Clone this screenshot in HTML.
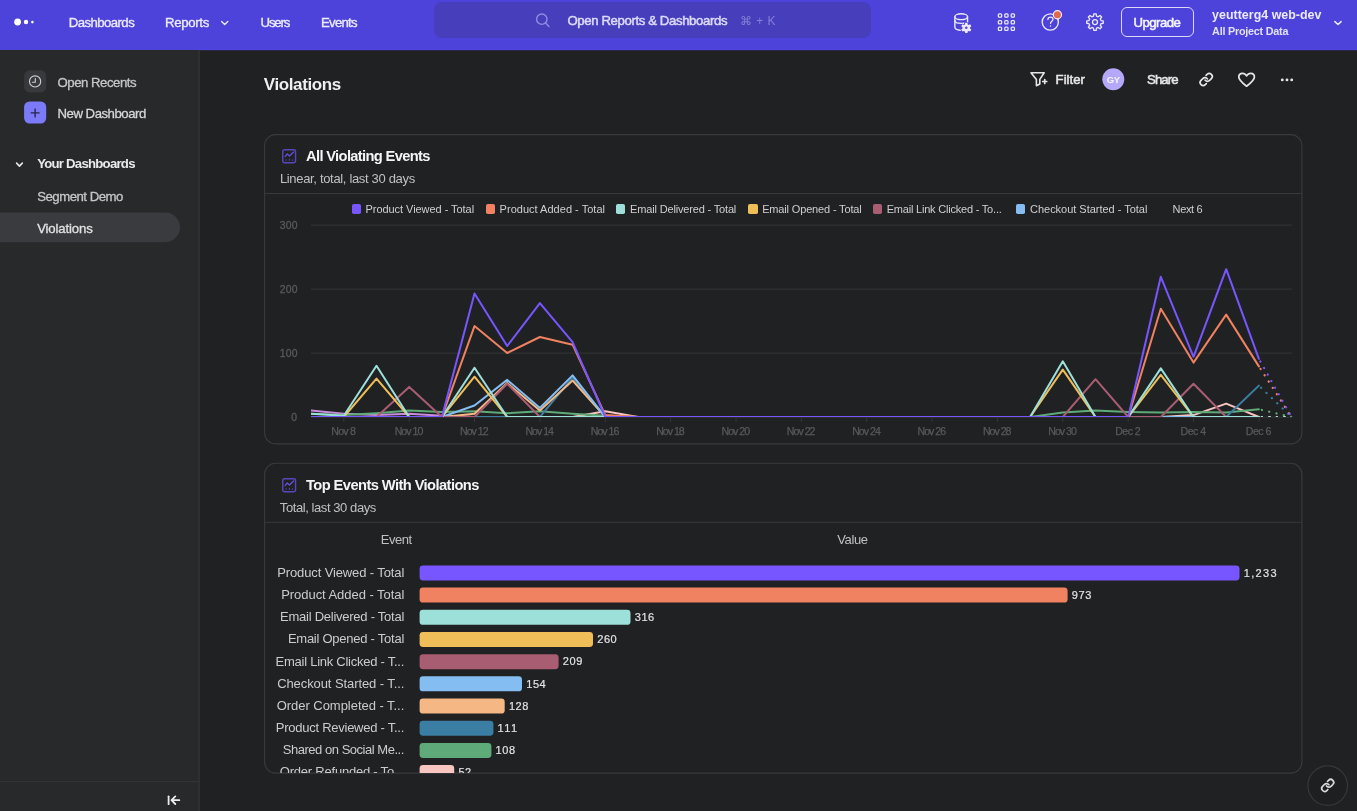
<!DOCTYPE html>
<html><head><meta charset="utf-8"><title>Violations - Mixpanel</title>
<style>
html,body{margin:0;padding:0;background:#202123;}
body{width:1357px;height:811px;overflow:hidden;position:relative;background:#202123;font-family:"Liberation Sans",sans-serif;}
div,svg{box-sizing:border-box;}
.a{position:absolute;}
</style></head><body>
<div id="app" style="position:absolute;left:0;top:0;width:1357px;height:811px;will-change:transform;">
<div class="a" style="left:0;top:0;width:1357px;height:50px;background:#4d43da;"></div>
<div class="a" style="left:0;top:50px;width:1357px;height:1px;background:rgba(77,67,218,0.2);"></div>
<svg class="a" style="left:0;top:0" width="60" height="50"><circle cx="17.6" cy="22" r="3.4" fill="#fff"/><circle cx="26" cy="22" r="2.2" fill="#fff"/><circle cx="32.4" cy="22.1" r="1.3" fill="#fff"/></svg>
<div style="position:absolute;top:16px;font:400 13.2px/13.2px 'Liberation Sans', sans-serif;color:#ebe9fb;white-space:pre;letter-spacing:-0.564px;-webkit-text-stroke:0.35px #ebe9fb;left:68.70px;">Dashboards</div>
<div style="position:absolute;top:16px;font:400 13.2px/13.2px 'Liberation Sans', sans-serif;color:#ebe9fb;white-space:pre;letter-spacing:-0.319px;-webkit-text-stroke:0.35px #ebe9fb;left:165.00px;">Reports</div>
<svg class="a" style="left:219px;top:18px" width="12" height="10"><path d="M2.6 3.5 L5.7 6.4 L8.8 3.5" fill="none" stroke="#ebe9fb" stroke-width="1.4" stroke-linecap="round" stroke-linejoin="round"/></svg>
<div style="position:absolute;top:16px;font:400 13.2px/13.2px 'Liberation Sans', sans-serif;color:#ebe9fb;white-space:pre;letter-spacing:-1.141px;-webkit-text-stroke:0.35px #ebe9fb;left:260.50px;">Users</div>
<div style="position:absolute;top:16px;font:400 13.2px/13.2px 'Liberation Sans', sans-serif;color:#ebe9fb;white-space:pre;letter-spacing:-0.750px;-webkit-text-stroke:0.35px #ebe9fb;left:321.00px;">Events</div>
<div class="a" style="left:434px;top:2px;width:437px;height:36px;border-radius:8px;background:#463ebb;"></div>
<svg class="a" style="left:530px;top:5px" width="30" height="30" fill="none" stroke="#918be3" stroke-width="1.4" stroke-linecap="round"><circle cx="11.8" cy="14.15" r="5.2"/><path d="M15.6 18.1 L19 21.6"/></svg>
<div style="position:absolute;top:14px;font:400 13.2px/13.2px 'Liberation Sans', sans-serif;color:#dcdaf6;white-space:pre;letter-spacing:-0.383px;-webkit-text-stroke:0.5px #dcdaf6;left:567.40px;">Open Reports &amp; Dashboards</div>
<div style="position:absolute;top:15px;font:400 12px/12px 'Liberation Sans', sans-serif;color:#857fd8;white-space:pre;letter-spacing:0.454px;left:740.00px;">⌘ + K</div>
<svg class="a" style="left:0;top:0" width="1357" height="50" fill="none" stroke="#ebe9fb" stroke-width="1.4" stroke-linecap="round" stroke-linejoin="round"><ellipse cx="961.2" cy="16.7" rx="6.35" ry="2.95"/><path d="M954.85 16.7 V27 C954.85 28.6 957.2 29.9 960.4 30.2"/><path d="M967.55 16.7 V22.2"/><path d="M954.85 20.5 C954.85 22.1 957.6 23.4 961.2 23.4 C962.2 23.4 963 23.3 963.8 23.2"/><path d="M970.06 28.43 L971.37 29.45 L970.18 31.51 L968.64 30.89 L967.72 31.42 L967.49 33.06 L965.11 33.06 L964.88 31.42 L963.96 30.89 L962.42 31.51 L961.23 29.45 L962.54 28.43 L962.54 27.37 L961.23 26.35 L962.42 24.29 L963.96 24.91 L964.88 24.38 L965.11 22.74 L967.49 22.74 L967.72 24.38 L968.64 24.91 L970.18 24.29 L971.37 26.35 L970.06 27.37 Z" fill="#ebe9fb" stroke="#4d43da" stroke-width="1.2" paint-order="stroke"/><circle cx="966.3" cy="27.8" r="1.25" fill="#4d43da" stroke="none"/><rect x="998.35" y="13.85" width="3.3" height="3.3" rx="0.9" stroke-width="1.25"/><rect x="1004.75" y="13.85" width="3.3" height="3.3" rx="0.9" stroke-width="1.25"/><rect x="1011.15" y="13.85" width="3.3" height="3.3" rx="0.9" stroke-width="1.25"/><rect x="998.35" y="20.50" width="3.3" height="3.3" rx="0.9" stroke-width="1.25"/><rect x="1004.75" y="20.50" width="3.3" height="3.3" rx="0.9" stroke-width="1.25"/><rect x="1011.15" y="20.50" width="3.3" height="3.3" rx="0.9" stroke-width="1.25"/><rect x="998.35" y="27.15" width="3.3" height="3.3" rx="0.9" stroke-width="1.25"/><rect x="1004.75" y="27.15" width="3.3" height="3.3" rx="0.9" stroke-width="1.25"/><rect x="1011.15" y="27.15" width="3.3" height="3.3" rx="0.9" stroke-width="1.25"/><circle cx="1050.3" cy="22" r="8.1"/><path d="M1047.9 19.6 C1047.9 17.9 1049.1 17.1 1050.5 17.1 C1051.9 17.1 1053 18 1053 19.3 C1053 21.1 1050.5 21.3 1050.5 23.4" stroke-width="1.25"/><circle cx="1050.5" cy="26.1" r="0.75" fill="#ebe9fb" stroke="none"/><circle cx="1057.4" cy="14.7" r="4.1" fill="#de694b" stroke="#eeebfc" stroke-width="1.2"/><path d="M1101.00 20.55 L1103.22 20.94 L1103.22 23.26 L1101.00 23.65 L1100.34 25.25 L1101.63 27.10 L1100.00 28.73 L1098.15 27.44 L1096.55 28.10 L1096.16 30.32 L1093.84 30.32 L1093.45 28.10 L1091.85 27.44 L1090.00 28.73 L1088.37 27.10 L1089.66 25.25 L1089.00 23.65 L1086.78 23.26 L1086.78 20.94 L1089.00 20.55 L1089.66 18.95 L1088.37 17.10 L1090.00 15.47 L1091.85 16.76 L1093.45 16.10 L1093.84 13.88 L1096.16 13.88 L1096.55 16.10 L1098.15 16.76 L1100.00 15.47 L1101.63 17.10 L1100.34 18.95 Z" stroke-width="1.35"/><circle cx="1095" cy="22.1" r="2.5" stroke-width="1.3"/></svg>
<div class="a" style="left:1121px;top:7px;width:73px;height:30px;border:1.5px solid #dcd9f8;border-radius:6px;"></div>
<div style="position:absolute;top:16px;font:400 13.2px/13.2px 'Liberation Sans', sans-serif;color:#f3f2fd;white-space:pre;letter-spacing:-0.573px;-webkit-text-stroke:0.55px #f3f2fd;left:1133.60px;">Upgrade</div>
<div style="position:absolute;top:9px;font:700 12.4px/12.4px 'Liberation Sans', sans-serif;color:#eceafb;white-space:pre;letter-spacing:0.033px;left:1212.10px;">yeutterg4 web-dev</div>
<div style="position:absolute;top:26px;font:700 10.8px/10.8px 'Liberation Sans', sans-serif;color:#e2e0f8;white-space:pre;letter-spacing:-0.233px;left:1212.10px;">All Project Data</div>
<svg class="a" style="left:1331px;top:18px" width="14" height="10"><path d="M3.9 3.6 L7 6.5 L10.1 3.6" fill="none" stroke="#eceafb" stroke-width="1.5" stroke-linecap="round" stroke-linejoin="round"/></svg>
<div class="a" style="left:0;top:50px;width:199px;height:761px;background:#28292b;"></div>
<svg class="a" style="left:190px;top:50px" width="20" height="761"><rect x="8.6" y="0" width="1.1" height="761" fill="#39393e"/><rect x="9.7" y="0" width="0.3" height="761" fill="#28292b"/></svg>
<svg class="a" style="left:0;top:50px" width="60" height="90" fill="none" stroke-linecap="round" stroke-linejoin="round">
<rect x="24.2" y="20.3" width="22" height="22.1" rx="5.5" fill="#38393c"/>
<circle cx="35.1" cy="31.4" r="5.6" stroke="#cfcfd2" stroke-width="1.15"/>
<path d="M35.3 28.6 V32.2 H32.4" stroke="#cfcfd2" stroke-width="1.15"/>
<rect x="24.1" y="51.4" width="22.1" height="22.2" rx="5.5" fill="#7b7bf9"/>
<path d="M35.1 58.9 V66.9 M31.1 62.9 H39.1" stroke="#26264a" stroke-width="1.35"/>
</svg>
<div style="position:absolute;top:76px;font:400 13.2px/13.2px 'Liberation Sans', sans-serif;color:#c6c6c9;white-space:pre;letter-spacing:-0.472px;-webkit-text-stroke:0.3px #c6c6c9;left:57.50px;">Open Recents</div>
<div style="position:absolute;top:107px;font:400 13.2px/13.2px 'Liberation Sans', sans-serif;color:#d6d6d8;white-space:pre;letter-spacing:-0.487px;-webkit-text-stroke:0.3px #d6d6d8;left:57.50px;">New Dashboard</div>
<svg class="a" style="left:13px;top:158px" width="14" height="12"><path d="M3.6 5.1 L6.45 8.1 L9.3 5.1" fill="none" stroke="#e8e8ea" stroke-width="1.6" stroke-linecap="round" stroke-linejoin="round"/></svg>
<div style="position:absolute;top:157px;font:700 13.2px/13.2px 'Liberation Sans', sans-serif;color:#eaeaeb;white-space:pre;letter-spacing:-0.760px;left:37.20px;">Your Dashboards</div>
<div style="position:absolute;top:190px;font:400 13.2px/13.2px 'Liberation Sans', sans-serif;color:#c6c6c9;white-space:pre;letter-spacing:-0.501px;-webkit-text-stroke:0.3px #c6c6c9;left:37.20px;">Segment Demo</div>
<svg class="a" style="left:0;top:205px" width="190" height="45"><rect x="-20" y="7.4" width="200" height="29.8" rx="14.9" fill="#3a3b3e"/></svg>
<div style="position:absolute;top:222px;font:400 13.2px/13.2px 'Liberation Sans', sans-serif;color:#e2e2e4;white-space:pre;letter-spacing:-0.155px;-webkit-text-stroke:0.3px #e2e2e4;left:37.20px;">Violations</div>
<div class="a" style="left:0;top:781px;width:199px;height:1px;background:#323336;"></div>
<svg class="a" style="left:160px;top:790px" width="26" height="20" fill="none" stroke="#ececee" stroke-width="1.8" stroke-linecap="round" stroke-linejoin="round"><path d="M8.6 6.3 V14.2"/><path d="M19.3 10.2 H11.7 M15.3 6.4 L11.5 10.2 L15.3 14"/></svg>
<div style="position:absolute;top:76px;font:700 17px/17px 'Liberation Sans', sans-serif;color:#efeff0;white-space:pre;letter-spacing:-0.391px;left:263.80px;">Violations</div>
<svg class="a" style="left:0;top:60px" width="1357" height="40" fill="none" stroke="#e6e6e8" stroke-width="1.6" stroke-linecap="round" stroke-linejoin="round"><path d="M1031 12.8 H1044.2 L1039.8 19.4 V24 L1036.4 25.7 V19.4 Z"/><path d="M1044.75 19.5 V23.5 M1042.75 21.5 H1046.75" stroke-width="1.7"/><g transform="translate(1206.2 19.5) scale(0.61) translate(-12 -12)" stroke-width="2.70"><path d="M10 13a5 5 0 0 0 7.54.54l3-3a5 5 0 0 0-7.07-7.07l-1.72 1.71"/><path d="M14 11a5 5 0 0 0-7.54-.54l-3 3a5 5 0 0 0 7.07 7.07l1.71-1.71"/></g><path d="M1246.6 26.2 C1241.6 22.4 1238.8 19.9 1238.8 17 C1238.8 14.9 1240.4 13.3 1242.5 13.3 C1244.2 13.3 1245.7 14.3 1246.6 15.9 C1247.5 14.3 1249 13.3 1250.7 13.3 C1252.8 13.3 1254.4 14.9 1254.4 17 C1254.4 19.9 1251.6 22.4 1246.6 26.2 Z" stroke-width="1.75"/><circle cx="1282.3" cy="19.9" r="1.45" fill="#e6e6e8" stroke="none"/><circle cx="1287.0" cy="19.9" r="1.45" fill="#e6e6e8" stroke="none"/><circle cx="1291.7" cy="19.9" r="1.45" fill="#e6e6e8" stroke="none"/></svg>
<div style="position:absolute;top:73px;font:400 13.2px/13.2px 'Liberation Sans', sans-serif;color:#e6e6e8;white-space:pre;letter-spacing:-0.006px;-webkit-text-stroke:0.55px #e6e6e8;left:1055.60px;">Filter</div>
<svg class="a" style="left:1100px;top:66px" width="28" height="28"><circle cx="13.3" cy="13.3" r="11" fill="#b5a8f8"/></svg>
<div style="position:absolute;top:75px;font:700 9.5px/9.5px 'Liberation Sans', sans-serif;color:#f6f4ff;white-space:pre;letter-spacing:-0.527px;left:1106.80px;">GY</div>
<div style="position:absolute;top:73px;font:400 13.2px/13.2px 'Liberation Sans', sans-serif;color:#e6e6e8;white-space:pre;letter-spacing:-0.929px;-webkit-text-stroke:0.55px #e6e6e8;left:1147.10px;">Share</div>
<svg class="a" style="left:0;top:0" width="1357" height="811" fill="none" stroke="#393a3e" stroke-width="1.1"><rect x="264.6" y="134.6" width="1037.3" height="309.3" rx="11"/><path d="M264.6 193.5 H1301.9"/><rect x="264.6" y="463.3" width="1037.3" height="309.8" rx="11"/><path d="M264.6 522.3 H1301.9"/></svg>
<svg class="a" style="left:282px;top:149.1px" width="16" height="16" fill="none" stroke-linecap="round" stroke-linejoin="round">
<rect x="0.75" y="0.75" width="12.8" height="12.9" rx="1.7" stroke="#5846bb" stroke-width="1.45"/>
<path d="M3.1 7.6 L5.2 5 L7.5 7 L11.6 3" stroke="#6a50e0" stroke-width="1.2"/>
<path d="M4.1 11.3 V10.7 M7.4 11.3 V10.2 M10.4 11.3 V10.7" stroke="#5846bb" stroke-width="1.1"/>
</svg>
<div style="position:absolute;top:149px;font:700 14.7px/14.7px 'Liberation Sans', sans-serif;color:#f5f5f6;white-space:pre;letter-spacing:-0.651px;left:306.00px;">All Violating Events</div>
<div style="position:absolute;top:172px;font:400 13px/13px 'Liberation Sans', sans-serif;color:#c0c0c3;white-space:pre;letter-spacing:-0.328px;left:279.90px;">Linear, total, last 30 days</div>
<svg class="a" style="left:282px;top:477.8px" width="16" height="16" fill="none" stroke-linecap="round" stroke-linejoin="round">
<rect x="0.75" y="0.75" width="12.8" height="12.9" rx="1.7" stroke="#5846bb" stroke-width="1.45"/>
<path d="M3.1 7.6 L5.2 5 L7.5 7 L11.6 3" stroke="#6a50e0" stroke-width="1.2"/>
<path d="M4.1 11.3 V10.7 M7.4 11.3 V10.2 M10.4 11.3 V10.7" stroke="#5846bb" stroke-width="1.1"/>
</svg>
<div style="position:absolute;top:478px;font:700 14.7px/14.7px 'Liberation Sans', sans-serif;color:#f5f5f6;white-space:pre;letter-spacing:-0.579px;left:306.00px;">Top Events With Violations</div>
<div style="position:absolute;top:501px;font:400 13px/13px 'Liberation Sans', sans-serif;color:#c0c0c3;white-space:pre;letter-spacing:-0.420px;left:279.80px;">Total, last 30 days</div>
<div class="a" style="left:351.5px;top:204.3px;width:9.3px;height:9.3px;border-radius:1.8px;background:#7856ff;"></div>
<div style="position:absolute;top:204px;font:400 11px/11px 'Liberation Sans', sans-serif;color:#cfcfd2;white-space:pre;letter-spacing:-0.050px;left:365.50px;">Product Viewed - Total</div>
<div class="a" style="left:485.6px;top:204.3px;width:9.3px;height:9.3px;border-radius:1.8px;background:#f08262;"></div>
<div style="position:absolute;top:204px;font:400 11px/11px 'Liberation Sans', sans-serif;color:#cfcfd2;white-space:pre;letter-spacing:0.021px;left:499.60px;">Product Added - Total</div>
<div class="a" style="left:616.1px;top:204.3px;width:9.3px;height:9.3px;border-radius:1.8px;background:#9de0da;"></div>
<div style="position:absolute;top:204px;font:400 11px/11px 'Liberation Sans', sans-serif;color:#cfcfd2;white-space:pre;letter-spacing:-0.165px;left:630.10px;">Email Delivered - Total</div>
<div class="a" style="left:748.3px;top:204.3px;width:9.3px;height:9.3px;border-radius:1.8px;background:#f0be58;"></div>
<div style="position:absolute;top:204px;font:400 11px/11px 'Liberation Sans', sans-serif;color:#cfcfd2;white-space:pre;letter-spacing:-0.159px;left:762.20px;">Email Opened - Total</div>
<div class="a" style="left:873.2px;top:204.3px;width:9.3px;height:9.3px;border-radius:1.8px;background:#a85d72;"></div>
<div style="position:absolute;top:204px;font:400 11px/11px 'Liberation Sans', sans-serif;color:#cfcfd2;white-space:pre;letter-spacing:-0.205px;left:886.70px;">Email Link Clicked - To...</div>
<div class="a" style="left:1015.7px;top:204.3px;width:9.3px;height:9.3px;border-radius:1.8px;background:#84bdf1;"></div>
<div style="position:absolute;top:204px;font:400 11px/11px 'Liberation Sans', sans-serif;color:#cfcfd2;white-space:pre;letter-spacing:-0.018px;left:1030.00px;">Checkout Started - Total</div>
<div style="position:absolute;top:204px;font:400 11px/11px 'Liberation Sans', sans-serif;color:#cfcfd2;white-space:pre;letter-spacing:-0.318px;left:1172.50px;">Next 6</div>
<svg class="a" style="left:0;top:0" width="1357" height="811" fill="none"><defs><clipPath id="cp"><rect x="310.9" y="200" width="990" height="217.0"/></clipPath></defs><path d="M311 225.1 H1291.8" stroke="#333437" stroke-width="1"/><path d="M311 289.1 H1291.8" stroke="#333437" stroke-width="1"/><path d="M311 353.1 H1291.8" stroke="#333437" stroke-width="1"/><path d="M311 417.3 H1291.8" stroke="#333437" stroke-width="1"/><path d="M343.8 417.6 V422" stroke="#333437" stroke-width="1.1"/><path d="M409.2 417.6 V422" stroke="#333437" stroke-width="1.1"/><path d="M474.5 417.6 V422" stroke="#333437" stroke-width="1.1"/><path d="M539.9 417.6 V422" stroke="#333437" stroke-width="1.1"/><path d="M605.3 417.6 V422" stroke="#333437" stroke-width="1.1"/><path d="M670.6 417.6 V422" stroke="#333437" stroke-width="1.1"/><path d="M736.0 417.6 V422" stroke="#333437" stroke-width="1.1"/><path d="M801.3 417.6 V422" stroke="#333437" stroke-width="1.1"/><path d="M866.7 417.6 V422" stroke="#333437" stroke-width="1.1"/><path d="M932.1 417.6 V422" stroke="#333437" stroke-width="1.1"/><path d="M997.4 417.6 V422" stroke="#333437" stroke-width="1.1"/><path d="M1062.8 417.6 V422" stroke="#333437" stroke-width="1.1"/><path d="M1128.2 417.6 V422" stroke="#333437" stroke-width="1.1"/><path d="M1193.5 417.6 V422" stroke="#333437" stroke-width="1.1"/><path d="M1258.9 417.6 V422" stroke="#333437" stroke-width="1.1"/><polyline clip-path="url(#cp)" points="311.1,417.0 343.8,417.0 376.5,417.0 409.2,417.0 441.9,417.0 474.5,417.0 507.2,417.0 539.9,417.0 572.6,417.0 605.3,417.0 638.0,417.0 670.6,417.0 703.3,417.0 736.0,417.0 768.7,417.0 801.3,417.0 834.0,417.0 866.7,417.0 899.4,417.0 932.1,417.0 964.8,417.0 997.4,417.0 1030.1,417.0 1062.8,417.0 1095.5,417.0 1128.2,417.0 1160.8,417.0 1193.5,417.0 1226.2,417.0 1258.9,417.0" stroke="#62b6ae" stroke-width="2" stroke-linejoin="round" stroke-linecap="round"/><path clip-path="url(#cp)" d="M1258.9 417.0 L1291.5 417.0" stroke="#62b6ae" stroke-width="2.2" stroke-linecap="round" stroke-dasharray="0.1 7.4" stroke-dashoffset="-3"/><polyline clip-path="url(#cp)" points="311.1,410.6 343.8,413.8 376.5,415.1 409.2,413.8 441.9,415.7 474.5,417.0 507.2,417.0 539.9,417.0 572.6,417.0 605.3,417.0 638.0,417.0 670.6,417.0 703.3,417.0 736.0,417.0 768.7,417.0 801.3,417.0 834.0,417.0 866.7,417.0 899.4,417.0 932.1,417.0 964.8,417.0 997.4,417.0 1030.1,417.0 1062.8,417.0 1095.5,417.0 1128.2,417.0 1160.8,417.0 1193.5,417.0 1226.2,417.0 1258.9,417.0" stroke="#c98bdc" stroke-width="2" stroke-linejoin="round" stroke-linecap="round"/><path clip-path="url(#cp)" d="M1258.9 417.0 L1291.5 417.0" stroke="#c98bdc" stroke-width="2.2" stroke-linecap="round" stroke-dasharray="0.1 7.4" stroke-dashoffset="-3"/><polyline clip-path="url(#cp)" points="311.1,417.0 343.8,417.0 376.5,417.0 409.2,417.0 441.9,417.0 474.5,417.0 507.2,417.0 539.9,417.0 572.6,417.0 605.3,411.2 638.0,417.0 670.6,417.0 703.3,417.0 736.0,417.0 768.7,417.0 801.3,417.0 834.0,417.0 866.7,417.0 899.4,417.0 932.1,417.0 964.8,417.0 997.4,417.0 1030.1,417.0 1062.8,417.0 1095.5,417.0 1128.2,417.0 1160.8,417.0 1193.5,415.1 1226.2,403.6 1258.9,417.0" stroke="#f9c5c0" stroke-width="2" stroke-linejoin="round" stroke-linecap="round"/><path clip-path="url(#cp)" d="M1258.9 417.0 L1291.5 417.0" stroke="#f9c5c0" stroke-width="2.2" stroke-linecap="round" stroke-dasharray="0.1 7.4" stroke-dashoffset="-3"/><polyline clip-path="url(#cp)" points="311.1,413.8 343.8,415.1 376.5,413.2 409.2,410.6 441.9,411.9 474.5,411.2 507.2,413.2 539.9,411.2 572.6,413.8 605.3,415.7 638.0,417.0 670.6,417.0 703.3,417.0 736.0,417.0 768.7,417.0 801.3,417.0 834.0,417.0 866.7,417.0 899.4,417.0 932.1,417.0 964.8,417.0 997.4,417.0 1030.1,417.0 1062.8,412.5 1095.5,410.6 1128.2,411.9 1160.8,412.5 1193.5,411.9 1226.2,412.5 1258.9,409.3" stroke="#5eaa78" stroke-width="2" stroke-linejoin="round" stroke-linecap="round"/><path clip-path="url(#cp)" d="M1258.9 409.3 L1291.5 417.0" stroke="#5eaa78" stroke-width="2.2" stroke-linecap="round" stroke-dasharray="0.1 7.4" stroke-dashoffset="-3"/><polyline clip-path="url(#cp)" points="311.1,417.0 343.8,417.0 376.5,417.0 409.2,417.0 441.9,417.0 474.5,417.0 507.2,417.0 539.9,417.0 572.6,377.3 605.3,417.0 638.0,417.0 670.6,417.0 703.3,417.0 736.0,417.0 768.7,417.0 801.3,417.0 834.0,417.0 866.7,417.0 899.4,417.0 932.1,417.0 964.8,417.0 997.4,417.0 1030.1,417.0 1062.8,417.0 1095.5,417.0 1128.2,417.0 1160.8,417.0 1193.5,417.0 1226.2,417.0 1258.9,385.6" stroke="#3a7fa3" stroke-width="2" stroke-linejoin="round" stroke-linecap="round"/><path clip-path="url(#cp)" d="M1258.9 385.6 L1291.5 417.0" stroke="#3a7fa3" stroke-width="2.2" stroke-linecap="round" stroke-dasharray="0.1 7.4" stroke-dashoffset="-3"/><polyline clip-path="url(#cp)" points="311.1,417.0 343.8,417.0 376.5,417.0 409.2,417.0 441.9,417.0 474.5,413.8 507.2,383.1 539.9,410.6 572.6,380.5 605.3,417.0 638.0,417.0 670.6,417.0 703.3,417.0 736.0,417.0 768.7,417.0 801.3,417.0 834.0,417.0 866.7,417.0 899.4,417.0 932.1,417.0 964.8,417.0 997.4,417.0 1030.1,417.0 1062.8,417.0 1095.5,417.0 1128.2,417.0 1160.8,417.0 1193.5,417.0 1226.2,417.0 1258.9,417.0" stroke="#f5b783" stroke-width="2" stroke-linejoin="round" stroke-linecap="round"/><path clip-path="url(#cp)" d="M1258.9 417.0 L1291.5 417.0" stroke="#f5b783" stroke-width="2.2" stroke-linecap="round" stroke-dasharray="0.1 7.4" stroke-dashoffset="-3"/><polyline clip-path="url(#cp)" points="311.1,417.0 343.8,417.0 376.5,417.0 409.2,417.0 441.9,417.0 474.5,405.5 507.2,379.9 539.9,408.0 572.6,375.4 605.3,417.0 638.0,417.0 670.6,417.0 703.3,417.0 736.0,417.0 768.7,417.0 801.3,417.0 834.0,417.0 866.7,417.0 899.4,417.0 932.1,417.0 964.8,417.0 997.4,417.0 1030.1,417.0 1062.8,417.0 1095.5,417.0 1128.2,417.0 1160.8,417.0 1193.5,417.0 1226.2,417.0 1258.9,417.0" stroke="#84bdf1" stroke-width="2" stroke-linejoin="round" stroke-linecap="round"/><path clip-path="url(#cp)" d="M1258.9 417.0 L1291.5 417.0" stroke="#84bdf1" stroke-width="2.2" stroke-linecap="round" stroke-dasharray="0.1 7.4" stroke-dashoffset="-3"/><polyline clip-path="url(#cp)" points="311.1,417.0 343.8,417.0 376.5,417.0 409.2,386.9 441.9,417.0 474.5,417.0 507.2,383.7 539.9,417.0 572.6,417.0 605.3,417.0 638.0,417.0 670.6,417.0 703.3,417.0 736.0,417.0 768.7,417.0 801.3,417.0 834.0,417.0 866.7,417.0 899.4,417.0 932.1,417.0 964.8,417.0 997.4,417.0 1030.1,417.0 1062.8,417.0 1095.5,379.2 1128.2,417.0 1160.8,417.0 1193.5,383.7 1226.2,417.0 1258.9,417.0" stroke="#a85d72" stroke-width="2" stroke-linejoin="round" stroke-linecap="round"/><path clip-path="url(#cp)" d="M1258.9 417.0 L1291.5 417.0" stroke="#a85d72" stroke-width="2.2" stroke-linecap="round" stroke-dasharray="0.1 7.4" stroke-dashoffset="-3"/><polyline clip-path="url(#cp)" points="311.1,417.0 343.8,417.0 376.5,378.6 409.2,417.0 441.9,417.0 474.5,376.7 507.2,417.0 539.9,417.0 572.6,417.0 605.3,417.0 638.0,417.0 670.6,417.0 703.3,417.0 736.0,417.0 768.7,417.0 801.3,417.0 834.0,417.0 866.7,417.0 899.4,417.0 932.1,417.0 964.8,417.0 997.4,417.0 1030.1,417.0 1062.8,369.6 1095.5,417.0 1128.2,417.0 1160.8,374.8 1193.5,417.0 1226.2,417.0 1258.9,417.0" stroke="#f0be58" stroke-width="2" stroke-linejoin="round" stroke-linecap="round"/><path clip-path="url(#cp)" d="M1258.9 417.0 L1291.5 417.0" stroke="#f0be58" stroke-width="2.2" stroke-linecap="round" stroke-dasharray="0.1 7.4" stroke-dashoffset="-3"/><polyline clip-path="url(#cp)" points="311.1,413.8 343.8,415.7 376.5,365.8 409.2,417.0 441.9,417.0 474.5,367.7 507.2,417.0 539.9,417.0 572.6,417.0 605.3,417.0 638.0,417.0 670.6,417.0 703.3,417.0 736.0,417.0 768.7,417.0 801.3,417.0 834.0,417.0 866.7,417.0 899.4,417.0 932.1,417.0 964.8,417.0 997.4,417.0 1030.1,417.0 1062.8,361.3 1095.5,417.0 1128.2,417.0 1160.8,368.4 1193.5,417.0 1226.2,417.0 1258.9,417.0" stroke="#9de0da" stroke-width="2" stroke-linejoin="round" stroke-linecap="round"/><path clip-path="url(#cp)" d="M1258.9 417.0 L1291.5 417.0" stroke="#9de0da" stroke-width="2.2" stroke-linecap="round" stroke-dasharray="0.1 7.4" stroke-dashoffset="-3"/><polyline clip-path="url(#cp)" points="311.1,417.0 343.8,417.0 376.5,417.0 409.2,417.0 441.9,417.0 474.5,326.1 507.2,353.0 539.9,337.0 572.6,344.7 605.3,415.1 638.0,417.0 670.6,417.0 703.3,417.0 736.0,417.0 768.7,417.0 801.3,417.0 834.0,417.0 866.7,417.0 899.4,417.0 932.1,417.0 964.8,417.0 997.4,417.0 1030.1,417.0 1062.8,417.0 1095.5,417.0 1128.2,417.0 1160.8,308.8 1193.5,362.6 1226.2,314.6 1258.9,366.4" stroke="#f08262" stroke-width="2" stroke-linejoin="round" stroke-linecap="round"/><path clip-path="url(#cp)" d="M1258.9 366.4 L1291.5 417.0" stroke="#f08262" stroke-width="2.2" stroke-linecap="round" stroke-dasharray="0.1 7.4" stroke-dashoffset="-3"/><polyline clip-path="url(#cp)" points="311.1,417.0 343.8,417.0 376.5,417.0 409.2,417.0 441.9,417.0 474.5,293.5 507.2,346.0 539.9,303.1 572.6,342.1 605.3,417.0 638.0,417.0 670.6,417.0 703.3,417.0 736.0,417.0 768.7,417.0 801.3,417.0 834.0,417.0 866.7,417.0 899.4,417.0 932.1,417.0 964.8,417.0 997.4,417.0 1030.1,417.0 1062.8,417.0 1095.5,417.0 1128.2,417.0 1160.8,276.8 1193.5,356.8 1226.2,269.2 1258.9,358.8" stroke="#7856ff" stroke-width="2" stroke-linejoin="round" stroke-linecap="round"/><path clip-path="url(#cp)" d="M1258.9 358.8 L1291.5 417.0" stroke="#7856ff" stroke-width="2.2" stroke-linecap="round" stroke-dasharray="0.1 7.4" stroke-dashoffset="-3"/></svg>
<div style="position:absolute;top:221px;font:400 10.4px/10.4px 'Liberation Sans', sans-serif;color:#58595d;white-space:pre;letter-spacing:0.176px;-webkit-text-stroke:0.3px #58595d;left:279.80px;">300</div>
<div style="position:absolute;top:285px;font:400 10.4px/10.4px 'Liberation Sans', sans-serif;color:#58595d;white-space:pre;letter-spacing:0.176px;-webkit-text-stroke:0.3px #58595d;left:279.80px;">200</div>
<div style="position:absolute;top:349px;font:400 10.4px/10.4px 'Liberation Sans', sans-serif;color:#58595d;white-space:pre;letter-spacing:0.176px;-webkit-text-stroke:0.3px #58595d;left:279.80px;">100</div>
<div style="position:absolute;top:413px;font:400 10.4px/10.4px 'Liberation Sans', sans-serif;color:#58595d;white-space:pre;-webkit-text-stroke:0.3px #58595d;left:291.30px;">0</div>
<div style="position:absolute;top:426px;font:400 10.6px/10.6px 'Liberation Sans', sans-serif;color:#58595d;white-space:pre;letter-spacing:-0.772px;-webkit-text-stroke:0.25px #58595d;left:331.33px;">Nov 8</div>
<div style="position:absolute;top:426px;font:400 10.6px/10.6px 'Liberation Sans', sans-serif;color:#58595d;white-space:pre;letter-spacing:-0.996px;-webkit-text-stroke:0.25px #58595d;left:394.69px;">Nov 10</div>
<div style="position:absolute;top:426px;font:400 10.6px/10.6px 'Liberation Sans', sans-serif;color:#58595d;white-space:pre;letter-spacing:-0.996px;-webkit-text-stroke:0.25px #58595d;left:460.05px;">Nov 12</div>
<div style="position:absolute;top:426px;font:400 10.6px/10.6px 'Liberation Sans', sans-serif;color:#58595d;white-space:pre;letter-spacing:-0.996px;-webkit-text-stroke:0.25px #58595d;left:525.41px;">Nov 14</div>
<div style="position:absolute;top:426px;font:400 10.6px/10.6px 'Liberation Sans', sans-serif;color:#58595d;white-space:pre;letter-spacing:-0.996px;-webkit-text-stroke:0.25px #58595d;left:590.77px;">Nov 16</div>
<div style="position:absolute;top:426px;font:400 10.6px/10.6px 'Liberation Sans', sans-serif;color:#58595d;white-space:pre;letter-spacing:-0.996px;-webkit-text-stroke:0.25px #58595d;left:656.13px;">Nov 18</div>
<div style="position:absolute;top:426px;font:400 10.6px/10.6px 'Liberation Sans', sans-serif;color:#58595d;white-space:pre;letter-spacing:-0.996px;-webkit-text-stroke:0.25px #58595d;left:721.49px;">Nov 20</div>
<div style="position:absolute;top:426px;font:400 10.6px/10.6px 'Liberation Sans', sans-serif;color:#58595d;white-space:pre;letter-spacing:-0.996px;-webkit-text-stroke:0.25px #58595d;left:786.85px;">Nov 22</div>
<div style="position:absolute;top:426px;font:400 10.6px/10.6px 'Liberation Sans', sans-serif;color:#58595d;white-space:pre;letter-spacing:-0.996px;-webkit-text-stroke:0.25px #58595d;left:852.21px;">Nov 24</div>
<div style="position:absolute;top:426px;font:400 10.6px/10.6px 'Liberation Sans', sans-serif;color:#58595d;white-space:pre;letter-spacing:-0.996px;-webkit-text-stroke:0.25px #58595d;left:917.57px;">Nov 26</div>
<div style="position:absolute;top:426px;font:400 10.6px/10.6px 'Liberation Sans', sans-serif;color:#58595d;white-space:pre;letter-spacing:-0.996px;-webkit-text-stroke:0.25px #58595d;left:982.93px;">Nov 28</div>
<div style="position:absolute;top:426px;font:400 10.6px/10.6px 'Liberation Sans', sans-serif;color:#58595d;white-space:pre;letter-spacing:-0.996px;-webkit-text-stroke:0.25px #58595d;left:1048.29px;">Nov 30</div>
<div style="position:absolute;top:426px;font:400 10.6px/10.6px 'Liberation Sans', sans-serif;color:#58595d;white-space:pre;letter-spacing:-0.522px;-webkit-text-stroke:0.25px #58595d;left:1115.15px;">Dec 2</div>
<div style="position:absolute;top:426px;font:400 10.6px/10.6px 'Liberation Sans', sans-serif;color:#58595d;white-space:pre;letter-spacing:-0.522px;-webkit-text-stroke:0.25px #58595d;left:1180.51px;">Dec 4</div>
<div style="position:absolute;top:426px;font:400 10.6px/10.6px 'Liberation Sans', sans-serif;color:#58595d;white-space:pre;letter-spacing:-0.522px;-webkit-text-stroke:0.25px #58595d;left:1245.87px;">Dec 6</div>
<div style="position:absolute;top:533px;font:400 13px/13px 'Liberation Sans', sans-serif;color:#c0c0c3;white-space:pre;letter-spacing:-0.510px;left:380.80px;">Event</div>
<div style="position:absolute;top:533px;font:400 13px/13px 'Liberation Sans', sans-serif;color:#c0c0c3;white-space:pre;letter-spacing:-0.395px;left:837.30px;">Value</div>
<div class="a" style="left:265px;top:523px;width:1036px;height:249.6px;overflow:hidden;border-radius:0 0 10px 10px;">
<div class="a" style="left:-265px;top:-523px;width:1357px;height:811px;">
<svg class="a" style="left:0;top:0" width="1357" height="811"><rect x="419.6" y="565.40" width="819.9" height="15" rx="3.4" fill="#7856ff"/></svg>
<div style="position:absolute;top:566px;font:400 13px/13px 'Liberation Sans', sans-serif;color:#cbcbce;white-space:pre;letter-spacing:-0.119px;left:277.20px;">Product Viewed - Total</div>
<div style="position:absolute;top:568px;font:400 11px/11px 'Liberation Sans', sans-serif;color:#e2e2e4;white-space:pre;letter-spacing:1.345px;-webkit-text-stroke:0.2px #e2e2e4;left:1243.75px;">1,233</div>
<svg class="a" style="left:0;top:0" width="1357" height="811"><rect x="419.6" y="587.59" width="648.0" height="15" rx="3.4" fill="#f08262"/></svg>
<div style="position:absolute;top:588px;font:400 13px/13px 'Liberation Sans', sans-serif;color:#cbcbce;white-space:pre;letter-spacing:-0.049px;left:281.20px;">Product Added - Total</div>
<div style="position:absolute;top:590px;font:400 11px/11px 'Liberation Sans', sans-serif;color:#e2e2e4;white-space:pre;letter-spacing:0.576px;-webkit-text-stroke:0.2px #e2e2e4;left:1071.85px;">973</div>
<svg class="a" style="left:0;top:0" width="1357" height="811"><rect x="419.6" y="609.78" width="210.9" height="15" rx="3.4" fill="#9de0da"/></svg>
<div style="position:absolute;top:610px;font:400 13px/13px 'Liberation Sans', sans-serif;color:#cbcbce;white-space:pre;letter-spacing:-0.255px;left:280.10px;">Email Delivered - Total</div>
<div style="position:absolute;top:612px;font:400 11px/11px 'Liberation Sans', sans-serif;color:#e2e2e4;white-space:pre;letter-spacing:0.576px;-webkit-text-stroke:0.2px #e2e2e4;left:634.74px;">316</div>
<svg class="a" style="left:0;top:0" width="1357" height="811"><rect x="419.6" y="631.97" width="173.4" height="15" rx="3.4" fill="#f0be58"/></svg>
<div style="position:absolute;top:632px;font:400 13px/13px 'Liberation Sans', sans-serif;color:#cbcbce;white-space:pre;letter-spacing:-0.251px;left:287.90px;">Email Opened - Total</div>
<div style="position:absolute;top:634px;font:400 11px/11px 'Liberation Sans', sans-serif;color:#e2e2e4;white-space:pre;letter-spacing:0.576px;-webkit-text-stroke:0.2px #e2e2e4;left:597.20px;">260</div>
<svg class="a" style="left:0;top:0" width="1357" height="811"><rect x="419.6" y="654.16" width="139.0" height="15" rx="3.4" fill="#a85d72"/></svg>
<div style="position:absolute;top:655px;font:400 13px/13px 'Liberation Sans', sans-serif;color:#cbcbce;white-space:pre;letter-spacing:-0.257px;left:275.60px;">Email Link Clicked - T...</div>
<div style="position:absolute;top:656px;font:400 11px/11px 'Liberation Sans', sans-serif;color:#e2e2e4;white-space:pre;letter-spacing:0.576px;-webkit-text-stroke:0.2px #e2e2e4;left:562.79px;">209</div>
<svg class="a" style="left:0;top:0" width="1357" height="811"><rect x="419.6" y="676.35" width="102.4" height="15" rx="3.4" fill="#84bdf1"/></svg>
<div style="position:absolute;top:677px;font:400 13px/13px 'Liberation Sans', sans-serif;color:#cbcbce;white-space:pre;letter-spacing:-0.091px;left:277.20px;">Checkout Started - T...</div>
<div style="position:absolute;top:679px;font:400 11px/11px 'Liberation Sans', sans-serif;color:#e2e2e4;white-space:pre;letter-spacing:0.576px;-webkit-text-stroke:0.2px #e2e2e4;left:526.21px;">154</div>
<svg class="a" style="left:0;top:0" width="1357" height="811"><rect x="419.6" y="698.54" width="85.1" height="15" rx="3.4" fill="#f5b783"/></svg>
<div style="position:absolute;top:699px;font:400 13px/13px 'Liberation Sans', sans-serif;color:#cbcbce;white-space:pre;letter-spacing:-0.036px;left:276.70px;">Order Completed - T...</div>
<div style="position:absolute;top:701px;font:400 11px/11px 'Liberation Sans', sans-serif;color:#e2e2e4;white-space:pre;letter-spacing:0.576px;-webkit-text-stroke:0.2px #e2e2e4;left:508.92px;">128</div>
<svg class="a" style="left:0;top:0" width="1357" height="811"><rect x="419.6" y="720.73" width="73.8" height="15" rx="3.4" fill="#3a7fa3"/></svg>
<div style="position:absolute;top:721px;font:400 13px/13px 'Liberation Sans', sans-serif;color:#cbcbce;white-space:pre;letter-spacing:-0.257px;left:275.80px;">Product Reviewed - T...</div>
<div style="position:absolute;top:723px;font:400 11px/11px 'Liberation Sans', sans-serif;color:#e2e2e4;white-space:pre;letter-spacing:1.390px;-webkit-text-stroke:0.2px #e2e2e4;left:497.62px;">111</div>
<svg class="a" style="left:0;top:0" width="1357" height="811"><rect x="419.6" y="742.92" width="71.8" height="15" rx="3.4" fill="#5eaa78"/></svg>
<div style="position:absolute;top:743px;font:400 13px/13px 'Liberation Sans', sans-serif;color:#cbcbce;white-space:pre;letter-spacing:-0.477px;left:282.80px;">Shared on Social Me...</div>
<div style="position:absolute;top:745px;font:400 11px/11px 'Liberation Sans', sans-serif;color:#e2e2e4;white-space:pre;letter-spacing:0.576px;-webkit-text-stroke:0.2px #e2e2e4;left:495.62px;">108</div>
<svg class="a" style="left:0;top:0" width="1357" height="811"><rect x="419.6" y="765.11" width="34.6" height="15" rx="3.4" fill="#f9c5c0"/></svg>
<div style="position:absolute;top:765px;font:400 13px/13px 'Liberation Sans', sans-serif;color:#cbcbce;white-space:pre;letter-spacing:-0.219px;left:279.80px;">Order Refunded - To...</div>
<div style="position:absolute;top:767px;font:400 11px/11px 'Liberation Sans', sans-serif;color:#e2e2e4;white-space:pre;letter-spacing:0.568px;-webkit-text-stroke:0.2px #e2e2e4;left:458.38px;">52</div>
</div></div>
<svg class="a" style="left:1297px;top:755px" width="60" height="56" fill="none" stroke="#d8d8da" stroke-linecap="round" stroke-linejoin="round"><circle cx="30.7" cy="30.6" r="19.8" fill="#1e1f21" stroke="#37383b" stroke-width="1.2"/><g transform="translate(30.7 30.4) scale(0.6) translate(-12 -12)" stroke-width="2.83"><path d="M10 13a5 5 0 0 0 7.54.54l3-3a5 5 0 0 0-7.07-7.07l-1.72 1.71"/><path d="M14 11a5 5 0 0 0-7.54-.54l-3 3a5 5 0 0 0 7.07 7.07l1.71-1.71"/></g></svg>
</div>
</body></html>
